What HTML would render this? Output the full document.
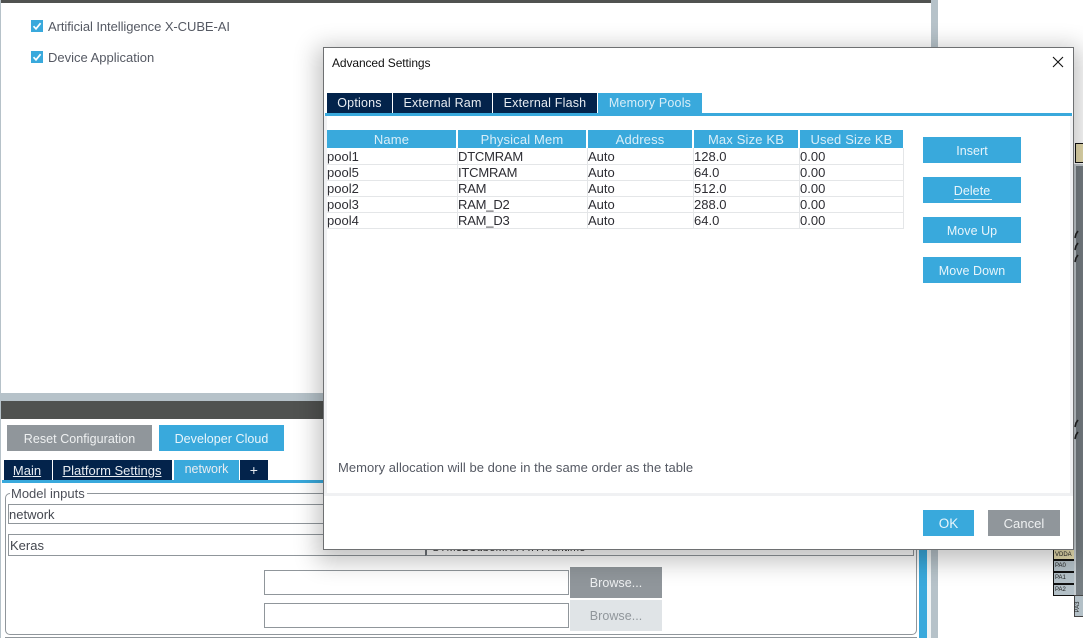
<!DOCTYPE html>
<html><head><meta charset="utf-8"><style>
html,body{margin:0;padding:0;background:#fff}
#r{position:relative;width:1083px;height:638px;overflow:hidden;background:#fff;font-family:"Liberation Sans",Arial,sans-serif;color:#44474f}
#r div{position:absolute;box-sizing:border-box;white-space:nowrap}
.b{background:#39a9dc;color:#e8f5fb;text-align:center;font-size:12.5px;letter-spacing:.05px;height:26px;line-height:28px}
.g{background:#90969b;color:#eef0f1;text-align:center;font-size:12.5px;letter-spacing:.05px}
.n{background:#03234b;color:#e8ecf1;text-align:center;font-size:12.5px;letter-spacing:.2px;height:20px;line-height:20px}
.t{font-size:13px;color:#555963;line-height:15px}
.h{background:#39a9dc;color:#d8eef8;text-align:center;font-size:13px;letter-spacing:.15px;height:18px;line-height:19px;top:130px}
.c{font-size:13px;color:#2d2d33;height:16px;line-height:16px}
.m{letter-spacing:-.2px}
.i{background:#fff;border:1px solid #90969b}
.p{background:#b3c0c7;font-size:6px;color:#222;line-height:10px;padding-left:1px;left:1054px;width:20px;height:10px}
.l{background:#e4e6e8}
</style></head><body><div id="r">

<div style="left:0;top:0;width:1px;height:638px;background:#b6c2c9"></div>
<div style="left:1px;top:0;width:930px;height:3px;background:#505250"></div>
<div style="left:931px;top:0;width:7px;height:638px;background:#b6c2c9"></div>
<div style="left:919px;top:480px;width:8px;height:158px;background:#39a9dc"></div>
<div style="left:927px;top:480px;width:4px;height:158px;background:#f1f4f5"></div>

<svg style="position:absolute;left:31px;top:20px" width="12" height="12"><rect width="12" height="12" fill="#39a9dc"/><path d="M2.5 6.2 L5 8.8 L9.6 3.2" fill="none" stroke="#fff" stroke-width="1.7"/></svg>
<div class="t" style="left:48px;top:19px;letter-spacing:-.07px">Artificial Intelligence X-CUBE-AI</div>
<svg style="position:absolute;left:31px;top:51px" width="12" height="12"><rect width="12" height="12" fill="#39a9dc"/><path d="M2.5 6.2 L5 8.8 L9.6 3.2" fill="none" stroke="#fff" stroke-width="1.7"/></svg>
<div class="t" style="left:48px;top:50px">Device Application</div>

<div style="left:1px;top:393px;width:930px;height:8px;background:#b6c2c9"></div>
<div style="left:1px;top:401px;width:930px;height:18px;background:#505250"></div>
<div class="g" style="left:7px;top:425px;width:145px;height:26px;line-height:28px">Reset Configuration</div>
<div class="b" style="left:159px;top:425px;width:125px">Developer Cloud</div>
<div class="n" style="left:4px;top:460px;width:48px;font-size:13px;letter-spacing:0;text-decoration:underline;line-height:21px;padding-right:2px">Main</div>
<div class="n" style="left:53px;top:460px;width:119px;font-size:13px;letter-spacing:0;text-decoration:underline;line-height:21px;padding-right:1px">Platform Settings</div>
<div class="n" style="left:174px;top:460px;width:65px;background:#39a9dc;letter-spacing:0;line-height:19px">network</div>
<div class="n" style="left:240px;top:460px;width:28px;font-size:14px">+</div>
<div style="left:2px;top:480px;width:917px;height:3px;background:#39a9dc"></div>

<div style="left:5px;top:493px;width:912px;height:142px;border:1px solid #90969b;border-radius:5px"></div>
<div style="left:10px;top:486px;background:#fff;font-size:13px;line-height:15px;padding:0 2px 0 1px;color:#4c4f58">Model inputs</div>
<div class="i" style="left:8px;top:504px;width:420px;height:20px;font-size:13px;line-height:19px;color:#44474f">network</div>
<div class="i" style="left:8px;top:534px;width:418px;height:22px;font-size:13px;line-height:21px;padding-left:1px;color:#44474f">Keras</div>
<div class="i" style="left:425px;top:534px;width:489px;height:22px;border-left:2px solid #70757a"></div>
<div style="left:432px;top:541px;font-size:11px;line-height:14px;color:#333;letter-spacing:.2px">STM32CubeMX/PATH runtime</div>
<div class="i" style="left:264px;top:570px;width:305px;height:25px"></div>
<div class="g" style="left:570px;top:567px;width:92px;height:31px;line-height:32px">Browse...</div>
<div class="i" style="left:264px;top:603px;width:305px;height:25px"></div>
<div class="g" style="left:570px;top:600px;width:92px;height:31px;line-height:32px;background:#e0e4e7;color:#90969b">Browse...</div>
<div style="left:5px;top:637px;width:912px;height:1px;background:#90969b"></div>

<!-- right chip -->
<div style="left:1075px;top:143px;width:8px;height:20px;background:#e6dcae;border:1px solid #111;border-right:0"></div>
<div style="left:1074px;top:164px;width:9px;height:431px;background:#767e83;border-left:2px solid #c5ccd0;border-top:2px solid #c5ccd0"></div>
<svg style="position:absolute;left:1072px;top:230px" width="8" height="220"><path d="M3 8l1-4 2-3M3 20l1-4 2-3M3 32l1-4 2-3M3 197l1-4 2-3M3 209l1-4 2-3" stroke="#222" stroke-width="1.6" fill="none"/></svg>
<div style="left:1053px;top:549px;width:21px;height:47px;background:#111"></div>
<div class="p" style="top:549px;height:10px;background:#e6dcae;line-height:12px">VDDA</div>
<div class="p" style="top:561px;height:10px;line-height:11px">PA0</div>
<div class="p" style="top:573px;height:10px;line-height:11px">PA1</div>
<div class="p" style="top:585px;height:10px;line-height:11px">PA2</div>
<div style="left:1074px;top:595px;width:9px;height:22px;background:#b3c0c7;border:1px solid #444;border-right:0"></div>
<div style="left:1072px;top:603px;width:12px;height:8px;font-size:6px;line-height:8px;color:#222;text-align:center;transform:rotate(-90deg)">PA3</div>

<!-- dialog -->
<div style="left:323px;top:47px;width:751px;height:503px;background:#fff;border:1px solid #6e7072;box-shadow:0 6px 22px 6px rgba(0,0,0,.24)"></div>
<div style="left:332px;top:56px;font-size:12px;line-height:15px;color:#111;letter-spacing:-.1px">Advanced Settings</div>
<svg style="position:absolute;left:1052px;top:56px" width="12" height="12"><path d="M1 1L11 11M11 1L1 11" stroke="#111" stroke-width="1.1" fill="none"/></svg>

<div style="left:324px;top:116px;width:3px;height:380px;background:#f0f1f3"></div>
<div style="left:1070px;top:116px;width:3px;height:380px;background:#f0f1f3"></div>
<div style="left:324px;top:493px;width:749px;height:3px;background:#f0f1f3"></div>

<div class="n" style="left:327px;top:93px;width:65px">Options</div>
<div class="n" style="left:393px;top:93px;width:99px">External Ram</div>
<div class="n" style="left:493px;top:93px;width:104px">External Flash</div>
<div class="n" style="left:598px;top:93px;width:104px;background:#39a9dc;color:#d8eef8">Memory Pools</div>
<div style="left:325px;top:113px;width:747px;height:3px;background:#39a9dc"></div>

<div class="h" style="left:327px;width:129px">Name</div>
<div class="h" style="left:458px;width:128px">Physical Mem</div>
<div class="h" style="left:588px;width:104px">Address</div>
<div class="h" style="left:694px;width:104px">Max Size KB</div>
<div class="h" style="left:800px;width:103px">Used Size KB</div>

<div class="l" style="left:327px;top:164px;width:577px;height:1px"></div>
<div class="l" style="left:327px;top:180px;width:577px;height:1px"></div>
<div class="l" style="left:327px;top:196px;width:577px;height:1px"></div>
<div class="l" style="left:327px;top:212px;width:577px;height:1px"></div>
<div class="l" style="left:327px;top:228px;width:577px;height:1px"></div>
<div class="l" style="left:457px;top:148px;width:1px;height:81px"></div>
<div class="l" style="left:587px;top:148px;width:1px;height:81px"></div>
<div class="l" style="left:693px;top:148px;width:1px;height:81px"></div>
<div class="l" style="left:799px;top:148px;width:1px;height:81px"></div>
<div class="l" style="left:903px;top:148px;width:1px;height:81px"></div>

<div class="c" style="left:327px;top:149px">pool1</div><div class="c m" style="left:458px;top:149px">DTCMRAM</div><div class="c" style="left:588px;top:149px">Auto</div><div class="c" style="left:694px;top:149px">128.0</div><div class="c" style="left:800px;top:149px">0.00</div>
<div class="c" style="left:327px;top:165px">pool5</div><div class="c m" style="left:458px;top:165px">ITCMRAM</div><div class="c" style="left:588px;top:165px">Auto</div><div class="c" style="left:694px;top:165px">64.0</div><div class="c" style="left:800px;top:165px">0.00</div>
<div class="c" style="left:327px;top:181px">pool2</div><div class="c m" style="left:458px;top:181px">RAM</div><div class="c" style="left:588px;top:181px">Auto</div><div class="c" style="left:694px;top:181px">512.0</div><div class="c" style="left:800px;top:181px">0.00</div>
<div class="c" style="left:327px;top:197px">pool3</div><div class="c m" style="left:458px;top:197px">RAM_D2</div><div class="c" style="left:588px;top:197px">Auto</div><div class="c" style="left:694px;top:197px">288.0</div><div class="c" style="left:800px;top:197px">0.00</div>
<div class="c" style="left:327px;top:213px">pool4</div><div class="c m" style="left:458px;top:213px">RAM_D3</div><div class="c" style="left:588px;top:213px">Auto</div><div class="c" style="left:694px;top:213px">64.0</div><div class="c" style="left:800px;top:213px">0.00</div>

<div class="b" style="left:923px;top:137px;width:98px">Insert</div>
<div class="b" style="left:923px;top:177px;width:98px">Delete</div>
<div style="left:954px;top:199px;width:38px;height:1px;background:#cfeaf6"></div>
<div class="b" style="left:923px;top:217px;width:98px">Move Up</div>
<div class="b" style="left:923px;top:257px;width:98px">Move Down</div>

<div class="t" style="left:338px;top:460px;letter-spacing:.03px">Memory allocation will be done in the same order as the table</div>

<div class="b" style="left:923px;top:510px;width:51px;font-size:13.5px">OK</div>
<div class="g" style="left:988px;top:510px;width:72px;height:26px;line-height:28px;font-size:13px">Cancel</div>

</div></body></html>
